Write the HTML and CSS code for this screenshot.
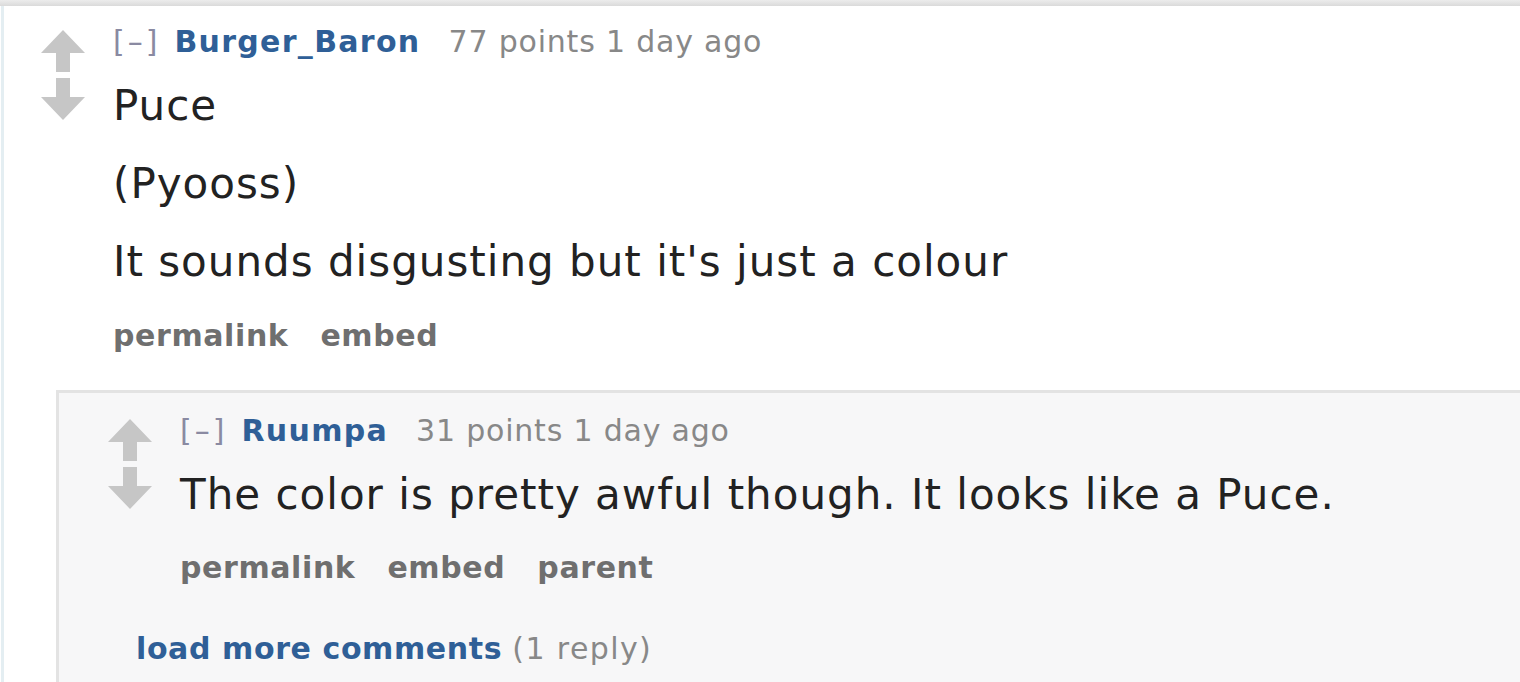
FILE: index.html
```html
<!DOCTYPE html>
<html lang="en">
<head>
    <meta charset="UTF-8">
    <title>Puce - comments</title>
    <link rel="stylesheet" href="styles.css">
</head>
<body>
    <div class="topbar"></div>

    <div class="thread">
        <div class="comment">
            <div class="midcol">
                <svg class="arrows" width="44" height="90" viewBox="0 0 44 90">
                    <path d="M22 0 L44 23 L29 23 L29 42 L15 42 L15 23 L0 23 Z"/>
                    <path d="M15 48 L29 48 L29 67 L44 67 L22 90 L0 67 L15 67 Z"/>
                </svg>
            </div>
            <div class="entry">
                <p class="tagline">
                    <a class="expand">[–]</a><a class="author">Burger_Baron</a><span class="meta">77 points 1 day ago</span>
                </p>
                <div class="md">
                    <p>Puce</p>
                    <p>(Pyooss)</p>
                    <p>It sounds disgusting but it's just a colour</p>
                </div>
                <ul class="buttons">
                    <li><a>permalink</a></li>
                    <li><a>embed</a></li>
                </ul>
            </div>
        </div>

        <div class="child">
            <div class="comment">
                <div class="midcol">
                    <svg class="arrows" width="44" height="90" viewBox="0 0 44 90">
                        <path d="M22 0 L44 23 L29 23 L29 42 L15 42 L15 23 L0 23 Z"/>
                        <path d="M15 48 L29 48 L29 67 L44 67 L22 90 L0 67 L15 67 Z"/>
                    </svg>
                </div>
                <div class="entry">
                    <p class="tagline">
                        <a class="expand">[–]</a><a class="author">Ruumpa</a><span class="meta">31 points 1 day ago</span>
                    </p>
                    <div class="md">
                        <p>The color is pretty awful though. It looks like a Puce.</p>
                    </div>
                    <ul class="buttons">
                        <li><a>permalink</a></li>
                        <li><a>embed</a></li>
                        <li><a>parent</a></li>
                    </ul>
                </div>
            </div>

            <div class="morecomments">
                <a>load more comments</a> <span class="count">(1 reply)</span>
            </div>
        </div>
    </div>
</body>
</html>
```

FILE: styles.css
```css
    :root {
        --text: #222222;
        --gray: #888888;
        --button: #6f6f6f;
        --link: #2f5f97;
        --expand: #8a8aa2;
        --arrow: #c6c6c6;
        --child-bg: #f7f7f8;
        --child-border: #e3e3e3;
    }

    * {
        margin: 0;
        padding: 0;
        box-sizing: border-box;
    }

    body {
        background-color: #ffffff;
        font-family: "DejaVu Sans", Verdana, sans-serif;
        color: var(--text);
        overflow: hidden;
    }

    .topbar {
        height: 6px;
        background: linear-gradient(#ececec, #dadada);
    }

    .thread {
        margin-left: 1px;
        border-left: 3px solid #e4eef2;
        min-height: 676px;
    }

    .comment {
        display: flex;
        align-items: flex-start;
        gap: 28px;
        padding: 18px 0 0 37px;
    }

    .midcol {
        width: 44px;
        margin-top: 6px;
        flex-shrink: 0;
    }

    .arrows {
        display: block;
        fill: var(--arrow);
    }

    .tagline {
        font-size: 30px;
        line-height: 36px;
        letter-spacing: 0.8px;
        margin-bottom: 16px;
        white-space: nowrap;
    }

    .tagline .expand {
        color: var(--expand);
        letter-spacing: 3px;
        margin-right: 14px;
    }

    .tagline .author {
        color: var(--link);
        font-weight: bold;
        letter-spacing: 1.3px;
        margin-right: 28px;
    }

    .tagline .meta {
        color: var(--gray);
    }

    .md p {
        font-size: 42px;
        line-height: 60px;
        letter-spacing: 1px;
        margin-bottom: 18px;
        white-space: nowrap;
    }

    .buttons {
        list-style: none;
        display: flex;
        gap: 32px;
        margin-top: 26px;
        font-size: 30px;
        line-height: 36px;
        letter-spacing: 0.6px;
        font-weight: bold;
    }

    .buttons a {
        color: var(--button);
    }

    .child {
        margin: 36px 0 0 52px;
        padding-top: 2px;
        border-top: 3px solid var(--child-border);
        border-left: 3px solid var(--child-border);
        background-color: var(--child-bg);
        min-height: 300px;
    }

    .child .comment {
        padding-left: 49px;
    }

    .child .buttons {
        margin-top: 25px;
    }

    .morecomments {
        margin-top: 45px;
        padding-left: 77px;
        font-size: 30px;
        line-height: 36px;
        letter-spacing: 0.6px;
        white-space: nowrap;
    }

    .morecomments a {
        color: var(--link);
        font-weight: bold;
    }

    .morecomments .count {
        color: var(--gray);
        letter-spacing: 1.4px;
    }
```
